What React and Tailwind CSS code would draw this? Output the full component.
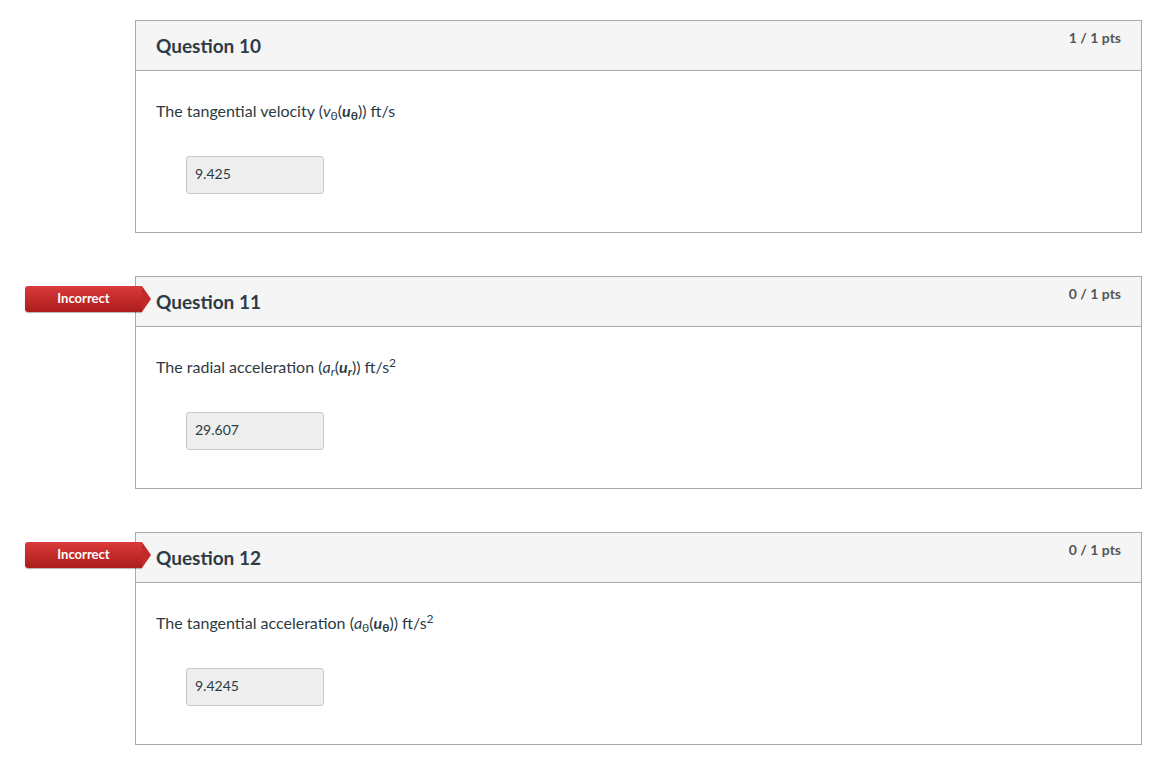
const questions = [
  {
    n: 10,
    pts: "1 / 1 pts",
    incorrect: false,
    value: "9.425",
    text: (
      <>
        The tangential velocity (<i>v</i>
        <sub>θ</sub>(<b><i>u</i></b>
        <sub className="font-bold">θ</sub>)) ft/s
      </>
    ),
  },
  {
    n: 11,
    pts: "0 / 1 pts",
    incorrect: true,
    value: "29.607",
    text: (
      <>
        The radial acceleration (<i>a</i>
        <sub><i>r</i></sub>(<b><i>u</i></b>
        <sub className="font-bold"><i>r</i></sub>)) ft/s<sup>2</sup>
      </>
    ),
  },
  {
    n: 12,
    pts: "0 / 1 pts",
    incorrect: true,
    value: "9.4245",
    text: (
      <>
        The tangential acceleration (<i>a</i>
        <sub>θ</sub>(<b><i>u</i></b>
        <sub className="font-bold">θ</sub>)) ft/s<sup>2</sup>
      </>
    ),
  },
];

function IncorrectBadge() {
  return (
    <div className="absolute left-[-111px] top-[9px] flex items-center">
      <div className="h-[26px] w-[117px] flex items-center justify-center rounded-l-[3px] bg-gradient-to-b from-[#db3a3a] to-[#ac1c1c] text-white text-[13px] font-bold shadow-[0_1px_1px_rgba(0,0,0,0.3)]">
        Incorrect
      </div>
      <div className="w-0 h-0 border-y-[13px] border-y-transparent border-l-[9px] border-l-[#c22a2a]" />
    </div>
  );
}

export default function App() {
  return (
    <div
      className="min-h-screen bg-white pt-5 pl-[135px] pr-[31px] text-[#2d3b45]"
      style={{ fontFamily: "Lato, 'Liberation Sans', sans-serif" }}
    >
      <div className="flex flex-col gap-[43px]">
        {questions.map((q) => (
          <div key={q.n} className="relative border border-[#aaaaaa]">
            {q.incorrect && <IncorrectBadge />}
            <div className="h-[50px] flex justify-between bg-[#f5f5f5] border-b border-[#aaaaaa] pl-5 pr-5">
              <h2 className="self-center text-[19px] font-bold pt-px">Question {q.n}</h2>
              <div className="pt-[6px] text-[14px] font-bold text-[#555]">{q.pts}</div>
            </div>
            <div className="pl-5 pt-[30px] pb-[38px]">
              <p className="text-[16px] leading-[20px] [&_sub]:text-[12px] [&_sub]:leading-none [&_sup]:text-[12px] [&_sup]:leading-none">
                {q.text}
              </p>
              <div className="mt-[35px] ml-[30px] w-[138px] h-[38px] flex items-center pl-[8px] pb-[3px] bg-[#eeeeee] border border-[#c8c8c8] rounded-[3px] text-[14px] text-[#2d3b45]">
                {q.value}
              </div>
            </div>
          </div>
        ))}
      </div>
    </div>
  );
}
